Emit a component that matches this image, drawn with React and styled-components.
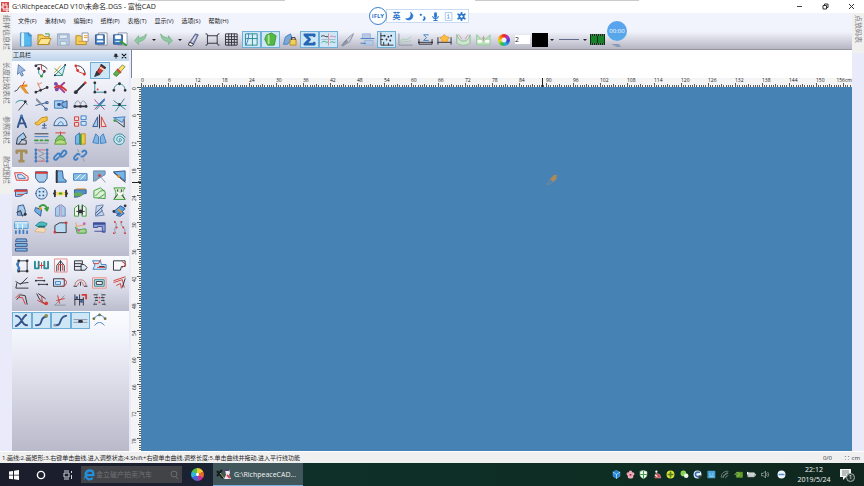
import React, { useEffect, useState } from "react";
import styled, { createGlobalStyle } from "styled-components";

const K = "#30323c";
const B = "#3f7fc4";
const L = "#a8cdea";
const N = "#34568e";
const R = "#d63a34";
const G = "#3c9b3c";
const T = "#2c8a94";
const O = "#e8962c";
const Y = "#f2cf58";
const W = "#ffffff";
const S = "#8a93a3";

// tool: [label, [[path, stroke, fill, width], ...], pressed]
const drawTools = [
  ["选择", [["M5 2l7 6-4 1 2 4-2 1-2-4-2 2z", "#5f7fb0", "#9dbde0"]]],
  ["调整", [["M2 3c3-3 8-1 12 3", K], ["M5 5v6l3 3 3-5", T], ["M2 3h0M5 6h0M11 9h0", K, null, 3], ["M8 2v5l3 2", R], ["M8 14h0", G, null, 3]]],
  ["拼合调整", [["M2 13L13 2L10 13z", T, "#dcebf5"], ["M2 10l6-7", O], ["M2 13h0M13 2h0", K, null, 2], ["M10 13L2 6", G]]],
  ["对称调整", [["M3 3c5-1 9 3 10 8", K], ["M3 4l2 5 8 3", R], ["M5 8h0M12 12h0M3 3h0", R, null, 3]]],
  ["智能笔", [["M5 10L10 2l4 3-6 7z", "#7a1c1a", R], ["M3 14L5 9l3 3z", K, K], ["M9 5l3 2", "#ffd0b0", null, 2], ["M10 2l4 3", K, null, 2]], true],
  ["橡皮擦", [["M2 12L11 2l3 2-9 10z", "#8a8f5c", "#ffe36b"], ["M2 12l3 2 3-3-3-3z", G, "#5eb050"], ["M6 7l3 3", R, null, 2]]],
  ["圆角", [["M1 12c5-1 4-8 8-5s2 5 6 7", K], ["M8 7l5-1M9 8l4 5", O, null, 3], ["M11 2l-2 4", R]]],
  ["加点", [["M2 13l12-5", K], ["M4 3l3 7M4 5l4-2", "#e3806a"], ["M2 13h0M14 8h0M7 11h0", K, null, 3]]],
  ["剪断", [["M3 4l9 9M12 3l-8 7", "#a43a94", null, 2], ["M2 8c4-3 8-1 12 3", R, null, 2], ["M3 4h0M4 10h0", "#7a4ba4", null, 4]]],
  ["直线", [["M3 13L12 4", K, null, 2], ["M3 13h0", K, null, 4], ["M13 3h0", R, null, 3]]],
  ["垂直线", [["M3 2v11h11", T], ["M3 13h0M14 13h0M3 3h0", K, null, 3], ["M6 10h0", R, null, 2]]],
  ["三点弧", [["M2 11c0-9 12-9 12 0", T], ["M2 11h0M14 11h0M8 4h0", K, null, 3]]],
  ["弧线", [["M2 6c4-4 10-3 12 2", T], ["M5 14l7-8", K], ["M12 5h0", K, null, 3]]],
  ["剪刀", [["M3 2l9 10M2 9l11-3", N], ["M12 12h2v2h-2zM13 5h2v2h-2z", N], ["M3 3l5 5", S, null, 2]]],
  ["连角", [["M2 4h9v8H2z", B, L], ["M10 6l5-2v8l-5-2z", N, "#79b1e1"], ["M6 8h1", N, W, 3]]],
  ["等份规", [["M2 10h12", K, null, 2], ["M2 8c1-5 5-5 6 0 1-5 5-5 6 0", S], ["M2 10h0M8 10h0M14 10h0", K, null, 3]]],
  ["点到线", [["M3 3c3 5 7 6 10 10M13 2L3 13", "#a44488", null, 1], ["M2 9h12M5 13l7-8", T], ["M8 8l5-5", B, null, 2]]],
  ["交点", [["M2 4l12 9M13 2L4 15M1 9h14", T], ["M8 8h0", K, null, 3]]],
  ["圆规", [["M4 14L8 2l5 12M5 10h7", N, null, 2], ["M8 2h0", B, null, 3]]],
  ["皮尺", [["M1 10c1 3 5 2 7-1l6-2V3L8 4 4 8z", "#c48b15", "#f4c74b"], ["M9 12h4M11 10v4M9 15h4", N]]],
  ["量角器", [["M1 12c1-11 14-11 14 0z", N, "#cfe2f3"], ["M5 12c1-5 6-5 6 0", B]]],
  ["移动", [["M2 3h4v4H2zM2 9h4v4H2z", R, "#f5dada"], ["M9 2h5v4H9zM9 8h5v4H9z", B, "#d7e8f6"]]],
  ["对称", [["M1 13L6 3v10z", N, L], ["M15 13L10 3v10z", R, "#f4dede"], ["M8 1v14", K]]],
  ["旋转", [["M2 4l12-1-3 6-9-5z", B, L], ["M4 7l9 7V6", K], ["M3 7h0", G, null, 3]]],
  ["转省", [["M4 7l6-5 3 5-5 3-3 4H3z", K, L], ["M8 9l5 1v4H5", K], ["M5 6l5-4", B]]],
  ["线型", [["M1 3h14", K], ["M1 6h14", B, null, 1], ["M1 10h3m3 0h2m3 0h3", G, null, 2], ["M1 13h14", S]]],
  ["展开", [["M3 9l3-4h4l3 4-1 4H3z", G, "#85c56e"], ["M2 13c1-5 11-5 12 0v1H2z", "#5f9c34", "#b9dd84"], ["M3 2h10M8 1v3", R]]],
  ["褶展开", [["M3 5l4-3v12H3z", "#3a78bd", "#77b8e7"], ["M9 3h4v11H9z", "#b78c23", "#f0cb48"], ["M8 4v10", G, null, 2]]],
  ["分割", [["M1 12l3-9 3 3v7zM15 12l-3-9-3 3v7z", B, "#82b5df"]]],
  ["荷叶", [["M14 7c-3-7-13-4-12 3 2 7 12 5 11-1-3-5-8-4-8 0 1 4 5 3 5 0-1-2-3-1-2 1", T, "#cde5f1"]]],
  ["文字", [["M3 3h10v2M8 3v11M3 3v2M6 14h4", "#a58e59", null, 3]]],
  ["缝迹", [["M2 3v11M14 3v11", N, null, 1], ["M5 3l6 3-6 3 6 3-3 2", S], ["M4 2h8M4 14h8", "#c86a78"], ["M2 2h0M2 6h0M2 10h0M2 14h0M14 2h0M14 6h0M14 10h0M14 14h0", B, null, 3]]],
  ["关联", [["M6 10l-2 2c-2 2-4-1-2-3l3-3c2-1 4 1 3 3M9 6l2-3c2-1 4 1 3 3l-3 3c-2 1-4 0-4-2", B, null, 2]]],
  ["不关联", [["M5 11l-1 1c-2 2-4-1-2-3l3-3 2 1M10 4l1-1c2-1 4 1 3 3l-3 3-2 0", B, null, 2], ["M5 2l1 2M11 12l1 2", S]]],
];

const patternTools = [
  ["缝份", [["M1 4h8l6 4v4H3z", R, "#f6e4e6"], ["M4 6h4l4 3v1H5z", B, "#dce9f5"]]],
  ["做衬", [["M2 3h12v7l-3 4H5l-3-4z", N, L], ["M2 4h12", R, null, 2]]],
  ["纸样", [["M4 2h6l1 8 3 2v2H4z", N, "#79b6e4"], ["M4 2v12", K, null, 2]]],
  ["布纹", [["M1 5h14v7H1z", B, "#86bee4"], ["M3 11l5-5M8 11l5-5", W]]],
  ["省山", [["M2 2h12v4L2 13z", "#658eab", "#82acd0"], ["M4 13l4-6 6 7", S], ["M8 7h0", R, null, 3]]],
  ["插入省褶", [["M2 3l12-1v11L8 8z", N, "#74b5e8"], ["M2 4l12 10", K], ["M7 8h0", O, null, 3]]],
  ["剪口", [["M2 4h12v4c-5-1-3 4-12 3z", N, L], ["M1 5h12", R, null, 2], ["M4 9h6", R]]],
  ["钮扣", [["M2 8c0-8 12-8 12 0s-12 8-12 0z", N, "#cde4f4", 1], ["M6 6h0M10 6h0M6 10h0M10 10h0", N, null, 2]]],
  ["扣眼", [["M1 8h14", K, null, 2], ["M2 5v6M14 5v6", K, null, 2], ["M5 8h6", "#ffe06a", null, 4], ["M7 8h2", G, null, 2]]],
  ["褶", [["M2 4h12v4c-5 0-5 4-12 4z", N, "#4f92c8"], ["M3 9h5", "#62aa5a", null, 4], ["M4 3h9", O]]],
  ["归拔", [["M2 12V5l7-3 5 4v7z", G, "#def0d6"], ["M4 10c3 0 2-6 9-5M7 13l6-4", G]]],
  ["加缝份", [["M2 14c3-3 3-7 0-12h12c-4 4-3 8 0 12z", G, "#d8edcd"], ["M6 4v5l-3 4M10 4v5l3 4", K], ["M6 7c2 3 3 3 5 0", W, null, 2]]],
  ["旋转衣片", [["M5 3l5-1 2 6v5H4z", N, L], ["M3 10l4-2 2 6", K, "#7b9cca"], ["M12 12h0", K, null, 3]]],
  ["水平旋转", [["M2 5l6 2-1 7-6-5z", N, "#6fb2e4"], ["M6 4c4-4 8-1 8 4l-2-2m2 2l1-3", G, null, 2], ["M7 6h0", O, null, 3]]],
  ["水平翻转", [["M3 5l4-3v12H3zM9 2l4 3v9H9z", "#6c8fc0", L], ["M8 2v12", "#ccafd4", null, 2]]],
  ["比拼行走", [["M2 5l4-3v12H2zM10 2l4 3v9h-4z", G, "#f2f8ef"], ["M4 9h8M6 3v9M10 3v9", K], ["M8 9h0", K, null, 4]]],
  ["纸样翻转", [["M5 3l7-1-2 5 3 6-9 1z", "#6f86ae", "#c5d4e9"], ["M4 11l7-7M5 13l6-5", N]]],
  ["重新顺滑", [["M2 9l7-6 5 3-6 6zM5 13l5-4 3 2-4 3z", N, "#4fa4e8"], ["M2 9h0M14 3h0", K, null, 3], ["M7 7l3 3", O, null, 2]]],
  ["褶裥", [["M1 2h14v7H1z", "#4f96cc", "#a5d6f3"], ["M2 12v2M6 11v3M10 11v3M14 12v2", B, null, 2], ["M1 3h14M4 5v4M9 5v4", W]]],
  ["分割纸样", [["M2 6c4-6 8-4 12-2-2 5-7 5-12 2z", T, "#4bbcbe"], ["M1 12c4-6 7-5 12-2l-2 3z", "#dbb48c", "#f6dcb6"], ["M5 7h6", "#1c6c76", null, 2]]],
  ["合并", [["M2 13V6l5-3h7v10z", K, "#b9daf0"], ["M2 13h0M14 3h0", R, null, 3]]],
  ["对称纸样", [["M3 8c4 5 8 0 11 2v4H5z", G, "#a9d68f"], ["M3 3l1 4 8-2", "#e6a060"], ["M12 4h0M6 11h0", "#cf5fb3", null, 3]]],
  ["缩水", [["M2 3h12v10h-3V7H6v1H2z", "#404c98", "#8aa3d8"], ["M2 4h11", "#404c98", null, 2], ["M3 12h10", "#404c98"]]],
  ["曲线对齐", [["M3 2c5 3-3 7 1 12M10 2c-3 5 7 6 3 12", S], ["M3 2h0M5 8h0M2 14h0M10 2h0M12 8h0M14 14h0", R, null, 2]]],
  ["层叠", [["M3 2h10l1 3H2zM2 7h12v3H2zM2 12h12v3H2z", N, "#7db7e2"]]],
];

const markTools = [
  ["选择点", [["M5 3h9v11H5z", K], ["M5 3h0M14 3h0M5 14h0M14 14h0", K, null, 3], ["M5 5c-6 2 5 6-1 8", B, null, 2]]],
  ["拷贝点", [["M1 4v7h4V4M15 4v7h-4V4", T, null, 2], ["M6 8h4M8 5v6", R]]],
  ["控制点", [["M4 14V8l4-5 4 5v6M8 3v11", K], ["M6 13V7h4v6", R], ["M2 1h13v14H2z", "#e88a86"]]],
  ["放码", [["M2 3h8v10H2z", K, "#e7e8ef"], ["M2 6h7M2 9h7", K], ["M9 7h3l3 3-2 3H9z", K, "#dceaf6"]]],
  ["平行放码", [["M1 3h8l1 4h5v5H1l2-4z", B, "#d8e8f5"], ["M2 6h5l2-4M6 10h8", R], ["M8 9h5", K]]],
  ["辅助线", [["M2 3h12v6h-4l-1 4H2z", K, "#f8f8fb"], ["M11 4l4 3-4 3", R]]],
  ["肩斜", [["M2 7l5 3 7-7M3 9l-1 5h13M7 9l8-1", K]]],
  ["平行", [["M2 6h9M5 10h9", K], ["M2 6h0M11 6h0M5 10h0M14 10h0", K, null, 2], ["M4 3h5", R]]],
  ["袖窿", [["M1 4h11v8H1z", K, "#dbeaf6"], ["M3 7h5v3H3z", B], ["M10 4c6 0 6 8 0 8", R]]],
  ["圆弧放码", [["M2 11C2 3 14 3 14 11M5 11c1-5 6-5 6 0", "#b8706c"], ["M1 12h3M12 12h3M8 8v3", K]]],
  ["边线", [["M1 3h14v11H1z", "#e88a86", "#f8e4e2"], ["M3 5h10v7H3z", T, "#b8e0ea"], ["M5 7h6v3H5z", K, W]]],
  ["等角", [["M2 6l12-4M2 8l9-3 2 8M5 11l4-2 1 5", R], ["M14 4l-3 9", K]]],
  ["档差", [["M3 8l4-5 5 1 2 9", K], ["M2 6l4-4M5 6h4l3 7", R]]],
  ["曲线放码", [["M3 2l3 6 6 5M5 2l7 5", K], ["M4 9l8 4M8 4l1 7", R], ["M13 12h0", R, null, 4]]],
  ["角度", [["M2 14L12 4M2 14h11", S], ["M5 4l2 8M4 9l8-2", R]]],
  ["等距", [["M2 3v11M7 3v11M11 6v8M2 8h9", K], ["M10 3h4v4", R, null, 2], ["M4 6h0M9 10h0", N, null, 3]]],
  ["比例", [["M2 14l4-12M14 14L10 2", S], ["M2 3h3M3 6h3M4 9h2M2 13h3M11 3h3M10 6h3M10 9h3M11 13h3", K, null, 1], ["M8 6h0M8 11h0", R, null, 2]]],
];

const curveTools = [
  ["相交等距", [["M2 3c7 0 5 10 12 10M13 2C8 5 9 11 2 14", N, null, 2]], true],
  ["曲线连接", [["M2 13c9 1 3-9 11-9", N, null, 2], ["M13 3h0", "#8a8c4c", null, 4]], true],
  ["曲线平滑", [["M2 13c9 1 3-9 12-10", N, null, 2], ["M2 13h0", S, null, 3]], true],
  ["直线连接", [["M1 7h14M1 10h14", S], ["M7 9h2", K, null, 3]], true],
  ["弧线控制", [["M2 6c4-5 8-5 12 0M3 13c3-4 7-4 10 0", B], ["M2 6h0M8 2h0M14 6h0", "#6c7444", null, 3]]],
];

const fileTools = [
  ["新建", [["M3 1h8l3 2v12H3z", "#4d91c6", "#55b9ef"], ["M5 2v12", "#d8f0fc", null, 3], ["M11 1v3h3", B]]],
  ["打开", [["M1 13V3h5l2 2h5v8z", "#b78820", Y], ["M1 13l3-6h11l-3 6z", "#b78820", "#ffe695"], ["M9 2h4v2", G]]],
  ["保存", [["M2 2h12v12H2z", "#94a9c4", "#b6cadf"], ["M4 3h8v4H4zM5 10h6v4H5z", "#9db3cc", "#e0eaf3"]]],
  ["导入", [["M1 13V4h5l2 2h4v7z", "#b78820", Y], ["M8 1h6v9H8z", S, W], ["M10 4h3M10 6h3M4 10h7", O]]],
  ["存盘", [["M5 1h9v13H5z", S, W], ["M2 3h9v10H2z", N, B], ["M4 4h5v3H4z", W, W], ["M4 10h5", W, null, 2]]],
  ["另存", [["M6 1h9v13H6z", S, W], ["M1 3h9v10H1z", N, B], ["M3 4h5v3H3zM3 10h5", W, W], ["M8 10l6 4", G, null, 2]]],
];
const undoTool = ["撤消", [["M2 9l4-5v3c4-2 7-2 8-5 0 6-4 8-8 8v3z", "#7fb490", "#8fc9a0"]]];
const redoTool = ["重做", [["M14 9l-4-5v3C6 5 3 5 2 2c0 6 4 8 8 8v3z", "#7fb490", "#8fc9a0"]]];

const viewGroups = [
  [
    ["橡皮", [["M4 11l6-9 3 1-5 10z", "#51577f", "#9da7ca"], ["M4 11l4 2-2 2-3-1z", K, W], ["M10 5l-3 5", W]]],
    ["全屏", [["M3 4h10v8H3z", K], ["M1 2h1l1 2M15 2h-1l-1 2M1 14h1l1-2M15 14h-1l-1-2", K]]],
    ["网格", [["M2 2h12v12H2zM5 2v12M8 2v12M11 2v12M2 5h12M2 8h12M2 11h12", K]]],
  ],
  [
    ["结构线", [["M2 2h12v12H2zM2 7h12M9 2v12", T, "#d9eff7"], ["M5 2c0 5-1 8-3 12", B]], true],
    ["纸样显示", [["M4 3l5-2 5 3-2 10H5L2 8z", G, "#55b744"], ["M6 4v8", "#b5e295", null, 2]], true],
    ["锁定", [["M4 5l5-3 2 5-5 6H2z", B, "#7ba9dc"], ["M9 8h6v6H9z", "#b88a20", Y], ["M10 8V6h4v2", K]]],
  ],
  [
    ["求和", [["M13 4V3H3l5 5-5 5h10v-1", "#2567b4", null, 3]], true],
    ["对比", [["M0 5c3-3 4 1 7 0", K], ["M10 5c2-2 3 1 6 0", "#cc72b7"], ["M1 11c3-3 4 1 6 0M10 11c2-2 3 1 5 0", "#38a48c"], ["M8 2v12", "#e88a86"], ["M1 8h14", "#a9b7c9"]], true],
    ["画笔", [["M14 2L8 7l-4 4 1 2 5-2 4-8z", S, "#c6cbd6"], ["M3 14l4-4", S, null, 3]]],
  ],
  [
    ["绘图", [["M3 2h8v5H3zM5 9h9v5H5z", "#9cb3d8", "#b7cae6"], ["M1 7h14M1 12h5", B]]],
    ["点放码表", [["M2 1v13h13M2 4h3M2 8h2M5 14v-3M10 14v-2", K], ["M6 4h0M10 5h0M13 4h0M8 8h0M12 9h0", K, null, 2]], true],
    ["规则", [["M1 2v12h14", S], ["M2 10c4-6 5 2 12-5M2 12c6-4 7 0 12-3", "#a8cdb3"]]],
  ],
  [
    ["合计", [["M1 8v5h14V8M1 11h14", K], ["M11 3H6l3 3-3 3h5", B], ["M1 11h0M15 11h0", K, null, 2]]],
    ["长度", [["M1 6v7M15 6v7M1 11h14", K], ["M8 3l2 2 3 1-2 2v2H5V8L3 6l3-1z", O, "#ffc03d"]]],
    ["凹弧", [["M1 3c2 9 12 9 14 0v9c-4 3-10 3-14 0z", "#8cbb91", "#cde5ce"], ["M3 3l3 4M13 3l-3 4", "#cf9b9b"]]],
  ],
  [
    ["对接", [["M1 3l5 5 2-3 2 3 5-5v11H1z", "#9cc8a1", "#b8dfba"], ["M8 5v4", "#d88"], ["M3 10h2M11 10h2", W, null, 3]]],
  ],
];

const trayTools = [
  ["网盘", [["M8 1l6 3v7l-6 4-6-4V4z", "#6cbaf5", "#1c87dc"], ["M2 4l6 4 6-4M8 8v7", W]]],
  ["花", [["M8 4h0M4 7h0M12 7h0M6 12h0M10 12h0", "#f3a9b9", null, 6], ["M8 9h0", "#ba4760", null, 3]]],
  ["安全", [["M8 1l6 2v5c0 4-3 6-6 7-3-1-6-3-6-7V3z", "#d5efd9", "#f2fff3"], ["M8 2v12M3 8h10", G, null, 2]]],
  ["消息", [["M6 3h0", W, null, 4], ["M6 6l6 2 2 6H4z", "#e9a0a2", "#c64d55"], ["M4 9l3 2", W, null, 2]]],
  ["加速", [["M8 8h0", "#d7e638", null, 14], ["M8 4v8M4 8h8", "#537a16", null, 3]]],
  ["微信", [["M6 6h0", "#8bd958", null, 10], ["M11 10h0", "#ecf8e8", null, 8], ["M4 5h0M7 5h0", G, null, 1]]],
  ["同步", [["M8 8h0", "#e8f2fa", null, 14], ["M11 4c-9-2-9 9 0 8", "#3770b0", null, 3], ["M11 10h3v4h-3z", K, K]]],
  ["助手", [["M2 2h12v12H2z", "#67bdf0", "#44a6df"], ["M5 7h1M10 7h1M5 11h6", W]]],
  ["无线网络", [["M2 12c1-7 5-9 11-10M6 13c0-4 3-6 8-7M10 14c0-2 1-3 4-4", "#b5bbb8"], ["M3 14L14 3", "#b5bbb8"]]],
  ["显卡", [["M5 4h10v9H5z", "#6bb029", "#5f9d28"], ["M1 8c5-7 11-2 7 2-3 2-4 0-5-2", "#b1d283"]]],
  ["电池", [["M2 5h11v7H2zM13 7h2v3", "#e5e9e7", "#cbd1ce"], ["M1 4v3", W, null, 2]]],
  ["音量", [["M1 6h3l4-4v12l-4-4H1z", "#d1d8d5"], ["M10 6c1 1 1 3 0 4M12 4c3 3 2 6 0 8", "#d1d8d5"]]],
];

const menus = ["文件(F)", "素材(M)", "编辑(E)", "纸样(P)", "表格(T)", "显示(V)", "选项(S)", "帮助(H)"];
const sideTabs = ["纸样信息栏", "长度比较表栏", "参照表栏", "款式图栏"];

// one ruler mark is 27px long and stands for 6cm
const MARK = 27;
const marksFor = (length) => Array.from({ length: Math.max(1, Math.ceil(length / MARK)) }, (_, i) => i * 6);

const useWindowSize = () => {
  const [size, setSize] = useState([window.innerWidth, window.innerHeight]);

  useEffect(() => {
    const onResize = () => setSize([window.innerWidth, window.innerHeight]);
    window.addEventListener("resize", onResize);
    return () => window.removeEventListener("resize", onResize);
  }, []);

  return size;
};

const Icon = ({ paths }) => (
  <svg viewBox="0 0 16 16" fill="none" strokeLinecap="round" strokeLinejoin="round" aria-hidden="true">
    {paths.map(([d, stroke, fill, width], i) => (
      <path key={i} d={d} stroke={stroke} fill={fill || "none"} strokeWidth={width || 1} />
    ))}
  </svg>
);

const Tool = ({ tool }) => (
  <ToolButton type="button" aria-label={tool[0]} aria-pressed={!!tool[2]} $on={tool[2]}>
    <Icon paths={tool[1]} />
  </ToolButton>
);

const TitleBar = () => (
  <TitleWrap>
    <svg width="8" height="10" viewBox="0 0 8 10" aria-hidden="true">
      <rect width="8" height="10" fill="#d84a4a" />
      <path d="M1 2h2v2H1v2h2v3M5 1v3h2M5 6h2v3H5z" fill="none" stroke="#fff" />
    </svg>
    <Title>G:\RichpeaceCAD V10\未命名.DGS - 富怡CAD</Title>
    <WindowButton type="button" aria-label="最小化">
      <svg width="7" height="7" viewBox="0 0 7 7"><path d="M1 3.5h5" stroke="#444" /></svg>
    </WindowButton>
    <WindowButton type="button" aria-label="还原">
      <svg width="7" height="7" viewBox="0 0 7 7"><path d="M1 2.5h3.5V6H1zM2.5 2V1H6v3.5H5" fill="none" stroke="#333" /></svg>
    </WindowButton>
    <WindowButton type="button" aria-label="关闭">
      <svg width="7" height="7" viewBox="0 0 7 7"><path d="M1 1l5 5M6 1L1 6" stroke="#333" /></svg>
    </WindowButton>
    <EdgeShade $left="16%" $width="17%" />
    <EdgeShade $left="55%" $width="19%" />
  </TitleWrap>
);

const InputBar = () => (
  <ImeWrap>
    <ImeLogo>iFLY</ImeLogo>
    <ImeBody>
      <ImeButton type="button">英</ImeButton>
      <ImeButton type="button" aria-label="半角">
        <Icon paths={[["M10 1c2 7-2 11-9 11 5 5 14 1 13-6 0-2-2-4-4-5z", "#2d76ce", "#2d76ce"]]} />
      </ImeButton>
      <ImeButton type="button" aria-label="标点">
        <Icon paths={[["M5 5h0", "#2d76ce", null, 4], ["M11 9c2 2 1 4-1 5", "#2d76ce", null, 3]]} />
      </ImeButton>
      <ImeButton type="button" aria-label="语音">
        <Icon paths={[["M8 3v5", "#2d76ce", null, 5], ["M3 8c1 5 9 5 10 0M8 12v3M5 15h6", "#2d76ce", null, 2]]} />
      </ImeButton>
      <ImeButton type="button" aria-label="键盘">
        <Icon paths={[["M3 1h11v14H3z", "#7aa9df"], ["M8 5v6M6 6l2-1M6 11h4", "#5d94d4"]]} />
      </ImeButton>
      <ImeButton type="button" aria-label="设置">
        <Icon paths={[["M8 1v3M8 12v3M2 4l3 2M11 10l3 2M2 12l3-2M11 6l3-2", "#2d76ce", null, 3], ["M4 8c0-5 8-5 8 0s-8 5-8 0z", "#2d76ce", null, 3]]} />
      </ImeButton>
    </ImeBody>
  </ImeWrap>
);

const Toolbar = () => (
  <ToolbarWrap>
    <ToolGroup>
      {fileTools.map((tool) => <Tool key={tool[0]} tool={tool} />)}
    </ToolGroup>
    <ToolGroup>
      <Tool tool={undoTool} />
      <DropButton type="button" aria-label="撤消列表" />
      <Tool tool={redoTool} />
      <DropButton type="button" aria-label="重做列表" />
    </ToolGroup>
    {viewGroups.map((group) => (
      <ToolGroup key={group[0][0]}>
        {group.map((tool) => <Tool key={tool[0]} tool={tool} />)}
      </ToolGroup>
    ))}
    <PlainButton type="button" aria-label="颜色">
      <ColorRing />
    </PlainButton>
    <SizeInput aria-label="线宽" defaultValue="2" />
    <ColorSwatch type="button" aria-label="线条颜色" />
    <DropButton type="button" aria-label="颜色列表" />
    <LineButton type="button" aria-label="线条类型" />
    <DropButton type="button" aria-label="线型列表" />
    <FilmButton type="button" aria-label="播放演示">
      <svg width="15" height="11" viewBox="0 0 15 11" aria-hidden="true">
        <path d="M0 0h15v11H0z" fill="#123016" />
        <path d="M1 2h6v7H1zM8 2h6v7H8z" fill="#16832a" />
        <path d="M1 1h13M1 10h13" stroke="#a4bfa4" strokeDasharray="1 1" />
      </svg>
    </FilmButton>
    <TimerSlot>
      <svg width="10" height="5" viewBox="0 0 10 5" aria-hidden="true">
        <path d="M0 1h8l2 3H6z" fill="#8c9bb7" />
      </svg>
      <Timer>00:00</Timer>
    </TimerSlot>
  </ToolbarWrap>
);

const Toolbox = () => (
  <ToolboxWrap>
    <ToolboxHeader>
      <span>工具栏</span>
      <HeaderButton type="button" aria-label="固定">
        <Icon paths={[["M6 3h4v5H6zM3 9h10M8 9v5", "#111", "#111", 2]]} />
      </HeaderButton>
      <HeaderButton type="button" aria-label="关闭工具栏">
        <Icon paths={[["M3 3l10 10M13 3L3 13", "#111", null, 3]]} />
      </HeaderButton>
    </ToolboxHeader>
    {[drawTools, patternTools, markTools, curveTools].map((tools, i) => (
      <ToolSection key={i}>
        {tools.map((tool) => <Tool key={tool[0]} tool={tool} />)}
      </ToolSection>
    ))}
  </ToolboxWrap>
);

const Workspace = () => {
  const [width, height] = useWindowSize();
  const topMarks = marksFor(width - 154);
  const leftMarks = marksFor(height - 122);

  return (
    <WorkspaceWrap>
      <PatternStrip />
      <TopRuler>
        {topMarks.map((mark, i) => (
          <TopMark key={mark}>
            <span>{i === topMarks.length - 1 ? `${mark}cm` : mark}</span>
            <svg width="27" height="4" viewBox="0 0 27 4" shapeRendering="crispEdges" aria-hidden="true">
              <path d="M.5 0v4M13.5 1v3M2.5 2v2M4.5 2v2M7.5 2v2M9.5 2v2M11.5 2v2M15.5 2v2M18.5 2v2M20.5 2v2M22.5 2v2M24.5 2v2" stroke="#5c5c5c" />
            </svg>
          </TopMark>
        ))}
        <TopPointer />
      </TopRuler>
      <CanvasRow>
        <LeftRuler>
          {leftMarks.map((mark) => (
            <LeftMark key={mark}>
              <span>{mark}</span>
              <svg width="4" height="27" viewBox="0 0 4 27" shapeRendering="crispEdges" aria-hidden="true">
                <path d="M0 .5h4M1 13.5h3M2 2.5h2M2 4.5h2M2 7.5h2M2 9.5h2M2 11.5h2M2 15.5h2M2 18.5h2M2 20.5h2M2 22.5h2M2 24.5h2" stroke="#5c5c5c" />
              </svg>
            </LeftMark>
          ))}
          <LeftPointer />
        </LeftRuler>
        <Canvas>
          <PenCursor viewBox="0 0 12 12" aria-hidden="true">
            <path d="M4 5l4-4h3L10 6 7 8z" fill="#a98a58" />
            <path d="M1 11l3-6 3 3z" fill="none" stroke="#76899a" />
          </PenCursor>
        </Canvas>
      </CanvasRow>
    </WorkspaceWrap>
  );
};

const Taskbar = () => (
  <TaskbarWrap>
    <TaskButton type="button" aria-label="开始">
      <svg width="10" height="10" viewBox="0 0 10 10"><path d="M0 1.5l4-.5v3.7H0zM5 .8L10 0v4.7H5zM0 5.5h4v3.8l-4-.6zM5 5.5h5V10l-5-.8z" fill="#fff" /></svg>
    </TaskButton>
    <TaskButton type="button" aria-label="小娜">
      <svg width="10" height="10" viewBox="0 0 10 10"><circle cx="5" cy="5" r="3.6" fill="none" stroke="#fff" strokeWidth="1.4" /></svg>
    </TaskButton>
    <TaskButton type="button" aria-label="任务视图">
      <svg width="10" height="10" viewBox="0 0 10 10"><path d="M1 3h5v4H1zM1 1h5M1 9h5M8.5 1v2M8.5 5v4" fill="none" stroke="#d4d6dc" /></svg>
    </TaskButton>
    <SearchBox>
      <svg width="12" height="12" viewBox="0 0 16 16" aria-hidden="true">
        <path d="M13 12c-4 4-10 1-9-4h10c0-8-9-8-11-1" fill="none" stroke="#2390df" strokeWidth="3" />
        <path d="M2 14C-1 10 9 1 14 2" fill="none" stroke="#2390df" />
      </svg>
      <input aria-label="搜索" placeholder="金立破产拍卖汽车" />
      <svg width="10" height="10" viewBox="0 0 10 10" aria-hidden="true">
        <circle cx="5" cy="4" r="3" fill="none" stroke="#6c6e72" />
        <path d="M7 7l2 2" stroke="#6c6e72" />
      </svg>
    </SearchBox>
    <WheelButton type="button" aria-label="浏览器">
      <ColorWheel />
    </WheelButton>
    <AppButton type="button">
      <svg width="16" height="14" viewBox="0 0 16 14" aria-hidden="true">
        <path d="M1 4l6 7M1 9l5-6" stroke="#161c1c" strokeWidth="2" />
        <path d="M4 6l4 5" stroke="#9bac58" />
        <path d="M9 2h4l1 4-1 2 2 4H8l2-4z" fill="#f4e7ed" />
        <path d="M9 2h4v2H9z" fill="#514077" />
        <path d="M11 8l3 3" stroke="#d74b51" strokeWidth="2" />
      </svg>
      <span>G:\RichpeaceCAD...</span>
    </AppButton>
    <Tray>
      {trayTools.map(([label, paths]) => (
        <TrayButton key={label} type="button" aria-label={label}>
          <Icon paths={paths} />
        </TrayButton>
      ))}
    </Tray>
    <TrayButton type="button" aria-label="输入法">
      <Icon paths={[["M8 8h0", "#eef6ff", null, 14], ["M4 8h8", "#568dcc", null, 3]]} />
    </TrayButton>
    <Clock>
      <span>22:12</span>
      <span>2019/5/24</span>
    </Clock>
    <Notice type="button" aria-label="通知">
      <svg width="11" height="11" viewBox="0 0 11 11" aria-hidden="true">
        <path d="M0 0h11v8H6l-3 3V8H0z" fill="#f4f6f5" />
        <path d="M2 2h7M2 4h7M2 6h4" stroke="#77867f" />
      </svg>
      <Badge>1</Badge>
    </Notice>
  </TaskbarWrap>
);

const App = () => (
  <>
    <GlobalStyle />
    <Page>
      <TitleBar />
      <InputBar />
      <Main>
        <SideColumn>
          {sideTabs.map((tab) => (
            <SideTab key={tab} type="button">{tab}</SideTab>
          ))}
        </SideColumn>
        <Center>
          <Menu>
            {menus.map((menu) => (
              <MenuButton key={menu} type="button">{menu}</MenuButton>
            ))}
          </Menu>
          <Toolbar />
          <Body>
            <Toolbox />
            <Workspace />
          </Body>
        </Center>
        <SideColumn>
          <SideTab type="button">点放码表</SideTab>
        </SideColumn>
      </Main>
      <StatusBar>
        <span>1.画线;2.画矩形;3.右键单击曲线,进入调整状态;4.Shift+右键单击曲线,调整长度;5.单击曲线并拖动,进入平行线功能</span>
        <StatusValue>0/0</StatusValue>
        <StatusValue>∷ cm</StatusValue>
      </StatusBar>
      <Taskbar />
    </Page>
  </>
);

export default App;

const GlobalStyle = createGlobalStyle`
  * {
    box-sizing: border-box;
  }
  body {
    margin: 0;
    font-family: "Open Sans", "Noto Sans CJK SC", sans-serif;
    font-size: 6px;
    color: #1c1c22;
  }
  button,
  input {
    margin: 0;
    padding: 0;
    border: 0;
    background: none;
    font: inherit;
    color: inherit;
  }
  svg {
    display: block;
    flex: none;
  }
`;

const Page = styled.div`
  position: relative;
  display: flex;
  flex-direction: column;
  height: 100vh;
  overflow: hidden;
  background: #e9ebfb;
`;

const TitleWrap = styled.header`
  position: relative;
  display: flex;
  align-items: center;
  flex: none;
  height: 13px;
  padding-left: 1px;
  background: #fff;
`;

const EdgeShade = styled.i`
  position: absolute;
  top: 0;
  left: ${({ $left }) => $left};
  width: ${({ $width }) => $width};
  height: 1px;
  background: #c9cace;
`;

const Title = styled.div`
  flex: 1;
  padding-left: 3px;
  font-size: 7px;
  line-height: 12px;
  white-space: nowrap;
`;

const WindowButton = styled.button`
  display: flex;
  align-items: center;
  justify-content: center;
  width: 26px;
  height: 12px;
`;

const ImeWrap = styled.div`
  position: absolute;
  top: 7px;
  left: 369px;
  z-index: 2;
  display: flex;
  align-items: center;
`;

const ImeLogo = styled.div`
  z-index: 1;
  width: 18px;
  height: 18px;
  border: 1px solid #3c82cf;
  border-radius: 50%;
  background: #fff;
  color: #2d76ce;
  font-size: 6px;
  font-weight: 700;
  line-height: 16px;
  text-align: center;
`;

const ImeBody = styled.div`
  display: flex;
  align-items: center;
  height: 14px;
  margin-left: -1px;
  padding-left: 3px;
  border: 1px solid #c9dcf3;
  background: #fbfdff;
`;

const ImeButton = styled.button`
  display: flex;
  align-items: center;
  justify-content: center;
  width: 13px;
  height: 12px;
  color: #2d76ce;
  font-size: 8px;
  font-weight: 700;
  line-height: 12px;
  & svg {
    width: 9px;
    height: 9px;
  }
`;

const Main = styled.div`
  display: flex;
  flex: 1;
  min-height: 0;
`;

const SideColumn = styled.aside`
  display: flex;
  flex-direction: column;
  align-items: stretch;
  flex: none;
  width: 12px;
`;

const SideTab = styled.button`
  padding: 2px 2px 10px;
  background: #f0f0ef;
  color: #74747c;
  font-size: 7px;
  line-height: 8px;
  text-align: left;
  writing-mode: vertical-rl;
  text-orientation: sideways;
`;

const Center = styled.div`
  display: flex;
  flex-direction: column;
  flex: 1;
  min-width: 0;
`;

const Menu = styled.nav`
  display: flex;
  flex: none;
  gap: 8px;
  height: 17px;
  padding-left: 6px;
  background: #f1f3fd;
`;

const MenuButton = styled.button`
  font-size: 6px;
  line-height: 17px;
  white-space: nowrap;
`;

const ToolbarWrap = styled.div`
  display: flex;
  align-items: center;
  flex: none;
  height: 20px;
  padding-left: 4px;
  border-bottom: 1px solid #96969f;
  background: linear-gradient(#f1f3fb 10%, #d3d4df 55%, #b5b5c3);
`;

const ToolGroup = styled.div`
  display: flex;
  align-items: center;
  padding-right: 1px;
`;

const ToolButton = styled.button`
  display: flex;
  align-items: center;
  justify-content: center;
  min-width: 19px;
  height: 17px;
  border: 1px solid ${({ $on }) => ($on ? "#6faed6" : "transparent")};
  background: ${({ $on }) => ($on ? "#cfe6f6" : "none")};
  & svg {
    width: 15px;
    height: 15px;
  }
`;

const PlainButton = styled.button`
  display: flex;
  align-items: center;
  justify-content: center;
  width: 19px;
  height: 17px;
`;

const DropButton = styled.button`
  display: flex;
  align-items: center;
  justify-content: center;
  width: 7px;
  height: 17px;
  &::after {
    content: "";
    border: 2px solid transparent;
    border-top-color: #222;
    border-bottom: 0;
  }
`;

const ColorRing = styled.span`
  width: 12px;
  height: 12px;
  border-radius: 50%;
  background:
    radial-gradient(#f1f1f6 0 2px, transparent 3px),
    conic-gradient(#e22, #a3c, #34c, #2ae, #2b4, #dd2, #f80, #e22);
`;

const SizeInput = styled.input`
  width: 15px;
  height: 9px;
  margin: 0 2px;
  background: #fff;
  font-size: 7px;
  line-height: 9px;
`;

const ColorSwatch = styled.button`
  width: 16px;
  height: 14px;
  background: #000;
`;

const LineButton = styled.button`
  width: 20px;
  height: 14px;
  margin: 0 2px 0 4px;
  &::after {
    content: "";
    display: block;
    border-top: 1px solid #636a8c;
  }
`;

const FilmButton = styled.button`
  display: flex;
  margin-left: 2px;
`;

const TimerSlot = styled.div`
  position: relative;
  width: 20px;
  height: 17px;
  margin-left: 2px;
  padding: 12px 4px 0;
`;

const Timer = styled.div`
  position: absolute;
  top: -10px;
  left: 0;
  width: 20px;
  height: 20px;
  border-radius: 50%;
  background: linear-gradient(#5ba2ee, #55a9e9);
  color: #fff;
  font-size: 6px;
  line-height: 20px;
  text-align: center;
`;

const Body = styled.div`
  display: flex;
  flex: 1;
  min-height: 0;
`;

const ToolboxWrap = styled.aside`
  display: flex;
  flex-direction: column;
  flex: none;
  width: 117px;
  margin-right: 2px;
`;

const ToolboxHeader = styled.div`
  display: flex;
  align-items: center;
  height: 11px;
  padding: 0 1px;
  background: linear-gradient(#e0ebf8, #bfd4ea);
  font-size: 6px;
  line-height: 11px;
  & span {
    flex: 1;
  }
`;

const HeaderButton = styled.button`
  display: flex;
  align-items: center;
  justify-content: center;
  width: 8px;
  height: 9px;
  & svg {
    width: 6px;
    height: 6px;
  }
`;

const ToolSection = styled.div`
  display: grid;
  grid-template-columns: repeat(6, 1fr);
  align-content: start;
  padding: 1px 0 3px;
  background: linear-gradient(#fbfcff, #dfe1ee 50%, #bbbccd);
  &:last-child {
    flex: 1;
    background: linear-gradient(#fbfcff, #f1f3fb 20%, #b9b9ca);
  }
`;

const WorkspaceWrap = styled.main`
  display: flex;
  flex-direction: column;
  flex: 1;
  min-width: 0;
  background: #f4f4f5;
`;

const PatternStrip = styled.div`
  flex: none;
  height: 28px;
  border-left: 1px solid #7c8498;
  background: #fff;
`;

const TopRuler = styled.div`
  position: relative;
  display: flex;
  flex: none;
  height: 9px;
  padding-left: 10px;
  overflow: hidden;
`;

const TopMark = styled.div`
  flex: none;
  width: 27px;
  & span {
    display: flex;
    font-size: 5px;
    line-height: 5px;
  }
  &:nth-last-child(2) {
    flex: 1;
    width: 0;
    min-width: 0;
  }
  &:nth-last-child(2) span {
    justify-content: flex-end;
  }
`;

const TopPointer = styled.i`
  position: absolute;
  bottom: 0;
  left: 57%;
  height: 9px;
  border-left: 1px solid #222;
`;

const CanvasRow = styled.div`
  display: flex;
  flex: 1;
  min-height: 0;
`;

const LeftRuler = styled.div`
  position: relative;
  flex: none;
  width: 10px;
  overflow: hidden;
`;

const LeftMark = styled.div`
  display: flex;
  justify-content: flex-end;
  height: 27px;
  & span {
    font-size: 5px;
    line-height: 6px;
    text-align: right;
    writing-mode: vertical-rl;
    transform: rotate(180deg);
  }
`;

const LeftPointer = styled.i`
  position: absolute;
  top: 26%;
  right: 0;
  width: 9px;
  border-top: 1px solid #222;
`;

const Canvas = styled.div`
  position: relative;
  flex: 1;
  background: #4682b4;
`;

const PenCursor = styled.svg`
  position: absolute;
  top: 24%;
  left: 57%;
  width: 12px;
  height: 12px;
`;

const StatusBar = styled.footer`
  display: flex;
  flex: none;
  gap: 12px;
  height: 12px;
  padding: 0 4px 0 2px;
  border-top: 1px solid #fff;
  background: #f0f0f0;
  font-size: 6px;
  line-height: 12px;
  white-space: nowrap;
  & span:first-child {
    flex: 1;
  }
`;

const StatusValue = styled.span`
  color: #33333a;
`;

const TaskbarWrap = styled.div`
  display: flex;
  align-items: center;
  flex: none;
  height: 23px;
  background: linear-gradient(90deg, #1b1d2b, #1b2231 24%, #0d3029 36%, #0e2d23 70%, #10261e);
`;

const TaskButton = styled.button`
  display: flex;
  align-items: center;
  justify-content: center;
  width: 27px;
  height: 23px;
`;

const SearchBox = styled.div`
  display: flex;
  align-items: center;
  gap: 1px;
  width: 101px;
  height: 17px;
  padding: 0 3px 0 2px;
  background: #414347;
  & input {
    flex: 1;
    min-width: 0;
    color: #ddd;
    font-size: 7px;
    line-height: 14px;
  }
  & input::placeholder {
    color: #707276;
    opacity: 1;
  }
`;

const WheelButton = styled.button`
  display: flex;
  align-items: center;
  justify-content: center;
  width: 31px;
  height: 23px;
`;

const ColorWheel = styled.span`
  width: 13px;
  height: 13px;
  border-radius: 50%;
  background:
    radial-gradient(#fff 0 1px, transparent 2px),
    conic-gradient(#f5c731 0 60deg, #e9682d 0 120deg, #c4329a 0 180deg, #5260cf 0 240deg, #31b4dc 0 300deg, #54bf4c 0);
`;

const AppButton = styled.button`
  display: flex;
  align-items: center;
  gap: 2px;
  width: 90px;
  height: 23px;
  padding-left: 3px;
  border-bottom: 1px solid #76b4df;
  background: #40565a;
  color: #f3f5f5;
  font-size: 7px;
  white-space: nowrap;
`;

const Tray = styled.div`
  display: grid;
  grid-template-columns: repeat(12, 1fr);
  width: 162px;
  margin: 0 3px 0 auto;
`;

const TrayButton = styled.button`
  display: flex;
  align-items: center;
  justify-content: center;
  min-width: 13px;
  height: 23px;
  & svg {
    width: 9px;
    height: 9px;
  }
`;

const Clock = styled.div`
  display: flex;
  flex-direction: column;
  width: 52px;
  color: #f0f4f2;
  font-size: 7px;
  line-height: 10px;
  text-align: center;
`;

const Notice = styled.button`
  position: relative;
  display: flex;
  margin-right: 13px;
`;

const Badge = styled.span`
  position: absolute;
  top: 4px;
  left: 6px;
  width: 9px;
  height: 9px;
  border: 1px solid #a8b2ad;
  border-radius: 50%;
  background: #26372f;
  color: #fff;
  font-size: 6px;
  line-height: 7px;
  text-align: center;
`;
